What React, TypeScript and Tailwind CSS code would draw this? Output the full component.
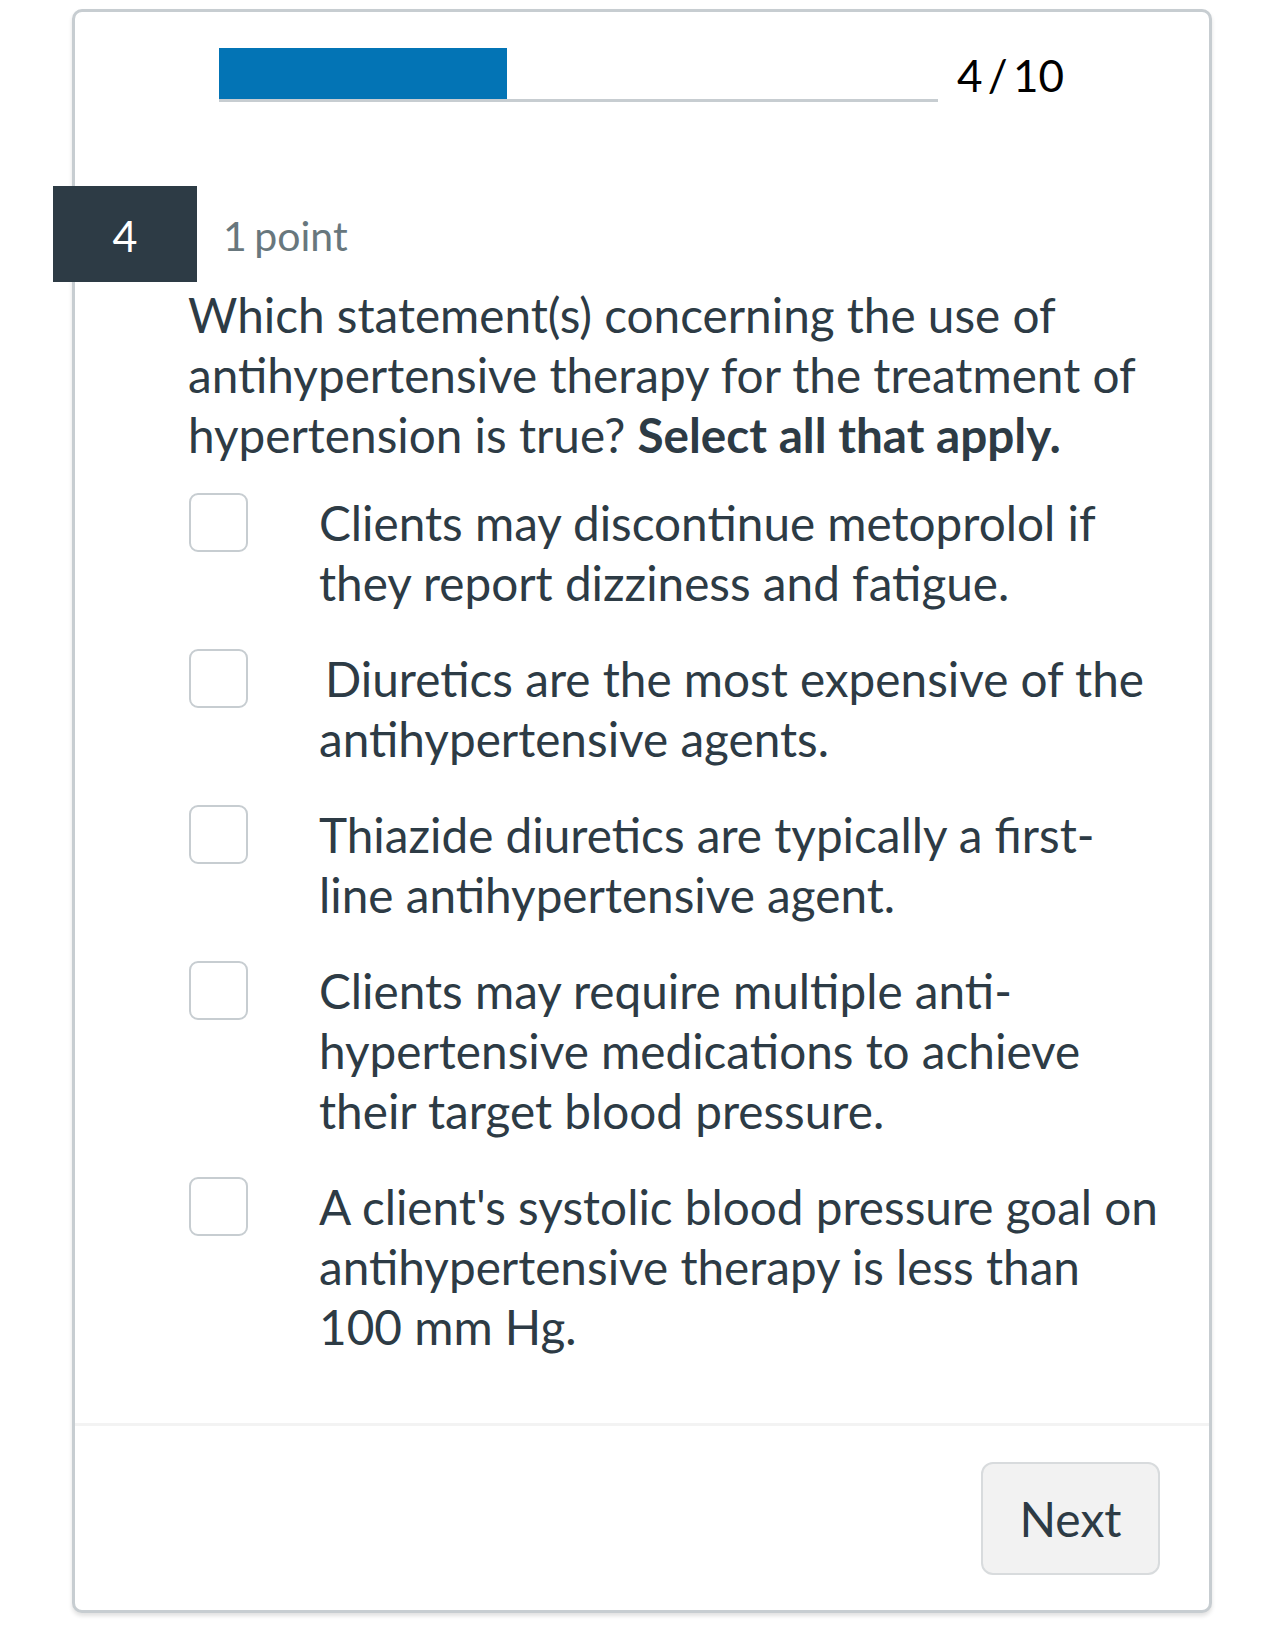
import React from "react";

const options = [
  { text: "Clients may discontinue metoprolol if they report dizziness and fatigue.", indent: false },
  { text: "Diuretics are the most expensive of the antihypertensive agents.", indent: true },
  { text: "Thiazide diuretics are typically a first-line antihypertensive agent.", indent: false },
  {
    text: "Clients may require multiple anti-hypertensive medications to achieve their target blood pressure.",
    indent: false,
  },
  {
    text: "A client's systolic blood pressure goal on antihypertensive therapy is less than 100 mm Hg.",
    indent: false,
  },
];

const App: React.FC = () => {
  return (
    <div
      className="min-h-screen bg-white pt-[9px] pl-[72px]"
      style={{ fontFamily: "Lato, 'Open Sans', sans-serif" }}
    >
      <div className="w-[1140px] rounded-[10px] border-[3px] border-[#c7cdd1] bg-white shadow-[0_3px_4px_rgba(0,0,0,0.12)]">
        {/* progress */}
        <div className="mt-[36px] flex items-center pl-[144px]">
          <div className="h-[54px] w-[719px] border-b-[3px] border-[#c7cdd1]">
            <div className="h-full w-[40%] bg-[#0374b5]" />
          </div>
          <div className="ml-[19px] text-[44px] leading-[54px] text-black [word-spacing:-6px]">
            4 / 10
          </div>
        </div>

        {/* question header */}
        <div className="mt-[84px] flex items-center">
          <div className="-ml-[22px] flex h-[96px] w-[144px] items-center justify-center bg-[#2d3b45] pt-[4px] text-[43px] text-white">
            4
          </div>
          <div className="ml-[26px] pt-[4px] text-[41px] text-[#68777d] [word-spacing:-3px]">
            1 point
          </div>
        </div>

        <div className="pl-[113px] pr-[45px] pt-[3px] text-[#2d3b45]">
          <p className="text-[47.7px] leading-[60px]">
            Which statement(s) concerning the use of antihypertensive therapy
            for the treatment of hypertension is true?{" "}
            <strong className="font-bold">Select all that apply.</strong>
          </p>

          <div className="mt-[28px] flex flex-col gap-[36px]">
            {options.map((o) => (
              <label key={o.text} className="flex items-start">
                <span className="ml-px block h-[59px] w-[59px] shrink-0 rounded-[9px] border-2 border-[#c7cdd1] bg-white" />
                <span className="ml-[71px] text-[47.7px] leading-[60px]">
                  {o.indent && <span className="inline-block w-[6px]" />}
                  {o.text}
                </span>
              </label>
            ))}
          </div>
        </div>

        <div className="mt-[66px] flex justify-end border-t-[3px] border-[#f3f3f3] pt-[36px] pb-[35px] pr-[49px]">
          <button className="h-[113px] w-[179px] rounded-[12px] border-2 border-[#d8dbdd] bg-[#f2f2f2] text-[48px] text-[#2d3b45]">
            Next
          </button>
        </div>
      </div>
    </div>
  );
};

export default App;
